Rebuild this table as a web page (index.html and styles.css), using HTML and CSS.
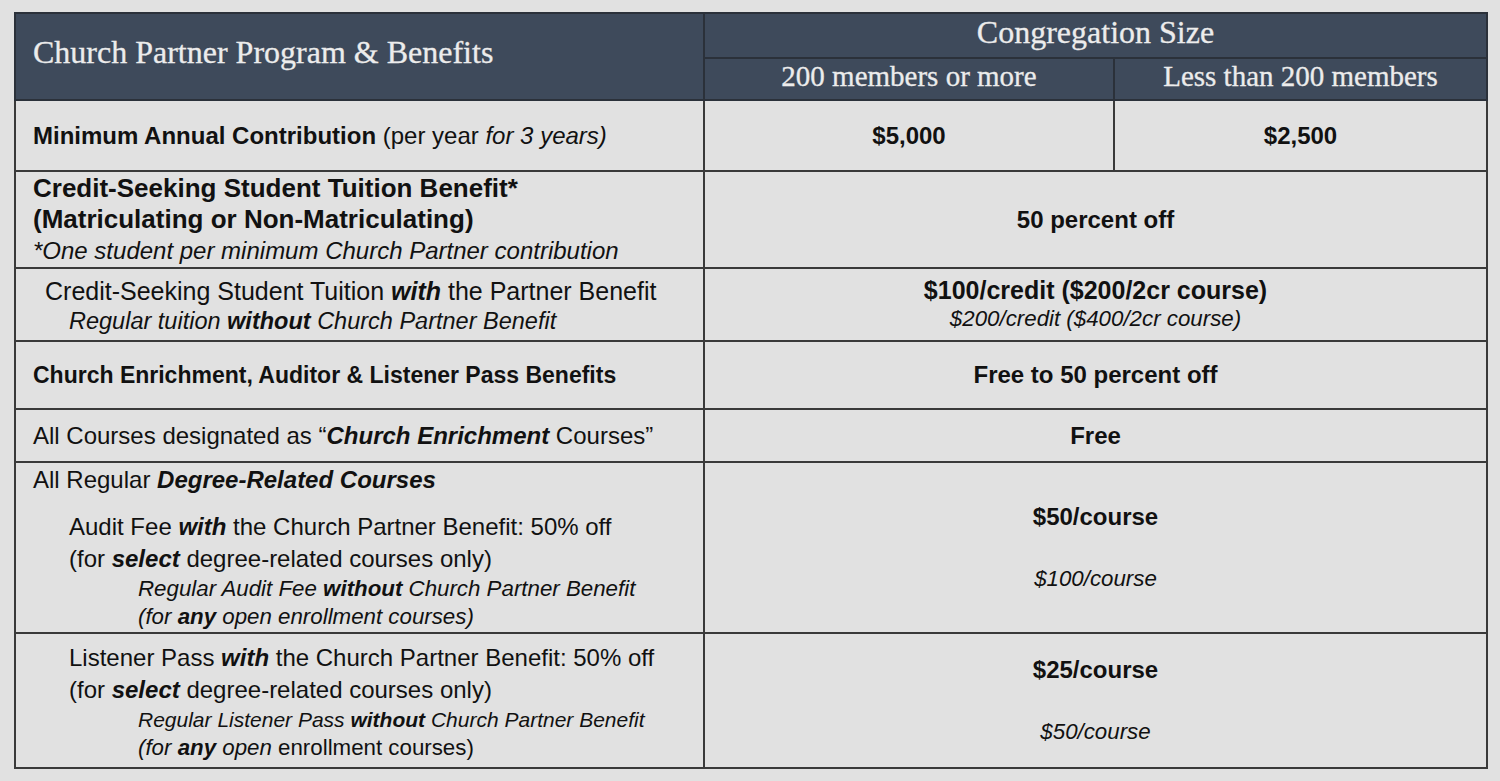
FILE: index.html
```html
<!DOCTYPE html>
<html>
<head>
<meta charset="utf-8">
<link rel="stylesheet" href="styles.css">
</head>
<body>
<table class="grid">
  <colgroup>
    <col class="c1"><col class="c2"><col class="c3">
  </colgroup>
  <tr class="h1">
    <th class="title" rowspan="2">Church Partner Program &amp; Benefits</th>
    <th class="cong" colspan="2">Congregation Size</th>
  </tr>
  <tr class="h2">
    <th class="sub">200 members or more</th>
    <th class="sub">Less than 200 members</th>
  </tr>
  <tr class="r-min">
    <td class="lbl"><b>Minimum Annual Contribution</b> (per year <i>for 3 years)</i></td>
    <td class="val"><b>$5,000</b></td>
    <td class="val"><b>$2,500</b></td>
  </tr>
  <tr class="r-credit">
    <td class="lbl"><b class="bigb">Credit-Seeking Student Tuition Benefit*<br>(Matriculating or Non-Matriculating)</b><br><i class="note">*One student per minimum Church Partner contribution</i></td>
    <td class="val" colspan="2"><b>50 percent off</b></td>
  </tr>
  <tr class="r-tuition">
    <td class="lbl ind1"><div class="l25">Credit-Seeking Student Tuition <b><i>with</i></b> the Partner Benefit</div><div class="ind1b"><i>Regular tuition <b>without</b> Church Partner Benefit</i></div></td>
    <td class="val" colspan="2"><div class="l25"><b>$100/credit ($200/2cr course)</b></div><div class="small"><i>$200/credit ($400/2cr course)</i></div></td>
  </tr>
  <tr class="r-enrich">
    <td class="lbl"><b class="smb">Church Enrichment, Auditor &amp; Listener Pass Benefits</b></td>
    <td class="val" colspan="2"><b>Free to 50 percent off</b></td>
  </tr>
  <tr class="r-all">
    <td class="lbl">All Courses designated as “<b><i>Church Enrichment</i></b> Courses”</td>
    <td class="val" colspan="2"><b>Free</b></td>
  </tr>
  <tr class="r-reg">
    <td class="lbl top">
      <div class="line">All Regular <b><i>Degree-Related Courses</i></b></div>
      <div class="ind2 gap">Audit Fee <b><i>with</i></b> the Church Partner Benefit: 50% off</div>
      <div class="ind2">(for <b><i>select</i></b> degree-related courses only)</div>
      <div class="ind3 small"><i>Regular Audit Fee <b>without</b> Church Partner Benefit</i></div>
      <div class="ind3 small"><i>(for <b>any</b> open enrollment courses)</i></div>
    </td>
    <td class="val" colspan="2"><div class="big"><b>$50/course</b></div><div class="small sp"><i>$100/course</i></div></td>
  </tr>
  <tr class="r-list">
    <td class="lbl top">
      <div class="ind2">Listener Pass <b><i>with</i></b> the Church Partner Benefit: 50% off</div>
      <div class="ind2">(for <b><i>select</i></b> degree-related courses only)</div>
      <div class="ind3 small tight"><i>Regular Listener Pass <b>without</b> Church Partner Benefit</i></div>
      <div class="ind3 small"><i>(for <b>any</b> open</i> enrollment courses)</div>
    </td>
    <td class="val" colspan="2"><div class="big"><b>$25/course</b></div><div class="small sp"><i>$50/course</i></div></td>
  </tr>
</table>
</body>
</html>
```
FILE: styles.css
```css
html, body {
  margin: 0;
  padding: 0;
  background: #e1e1e1;
}
body {
  padding: 12px 0 0 14px;
  font-family: "Liberation Sans", Arial, sans-serif;
  color: #111;
}
.grid {
  border-collapse: collapse;
  width: 1472px;
  table-layout: fixed;
  background: #e1e1e1;
}
.c1 { width: 689px; }
.c2 { width: 410px; }
.c3 { width: 373px; }
.grid th, .grid td {
  border: 2px solid #3a3a3a;
  padding: 0;
}
.grid th {
  background: #3e4a5b;
  color: #ececec;
  font-family: "Liberation Serif", "DejaVu Serif", serif;
  font-weight: normal;
  border-color: #2b313a;
  -webkit-text-stroke: 0.3px #ececec;
}
.h1 { height: 45px; }
.h2 { height: 42px; }
.title {
  text-align: left;
  padding-left: 17px !important;
  font-size: 32px;
  padding-bottom: 8px !important;
}
.cong {
  font-size: 32px;
  padding-bottom: 6px !important;
}
.sub {
  font-size: 29px;
  padding-bottom: 6px !important;
}
.lbl {
  font-size: 24px;
  padding-left: 17px !important;
  line-height: 32px;
  vertical-align: middle;
}
.lbl.top { vertical-align: top; }
.val {
  text-align: center;
  font-size: 24px;
  vertical-align: middle;
}
.bigb { font-size: 26px; }
.smb { font-size: 23px; }
.l25 { font-size: 25px; }
.note { font-size: 24px; line-height: 28px; }
.small { font-size: 22.3px; line-height: 28px; }
.r-min { height: 71px; }
.r-credit { height: 97px; }
.r-credit .lbl { line-height: 31px; }
.r-tuition { height: 73px; }
.r-enrich { height: 68px; }
.r-all { height: 53px; }
.r-reg { height: 171px; }
.r-list { height: 135px; }
.ind1 { padding-left: 29px !important; }
.ind1b { padding-left: 24px; font-size: 23.5px; line-height: 28px; }
.ind2 { padding-left: 36px; }
.ind3 { padding-left: 105px; }
.ind3.tight { font-size: 21px; }
.gap { margin-top: 15px; }
.r-reg .lbl { padding-top: 1px !important; }
.r-list .lbl { padding-top: 8px !important; }
.sp { margin-top: 34px; }
```
